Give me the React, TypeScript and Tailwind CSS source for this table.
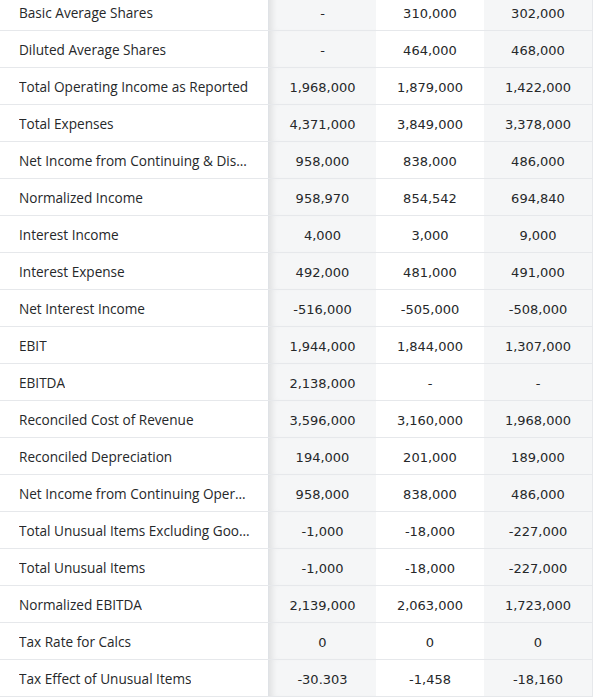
import React from "react";

type Row = { label: string; values: [string, string, string] };

const rows: Row[] = [
  { label: "Basic Average Shares", values: ["-", "310,000", "302,000"] },
  { label: "Diluted Average Shares", values: ["-", "464,000", "468,000"] },
  { label: "Total Operating Income as Reported", values: ["1,968,000", "1,879,000", "1,422,000"] },
  { label: "Total Expenses", values: ["4,371,000", "3,849,000", "3,378,000"] },
  { label: "Net Income from Continuing & Discontinued Operation", values: ["958,000", "838,000", "486,000"] },
  { label: "Normalized Income", values: ["958,970", "854,542", "694,840"] },
  { label: "Interest Income", values: ["4,000", "3,000", "9,000"] },
  { label: "Interest Expense", values: ["492,000", "481,000", "491,000"] },
  { label: "Net Interest Income", values: ["-516,000", "-505,000", "-508,000"] },
  { label: "EBIT", values: ["1,944,000", "1,844,000", "1,307,000"] },
  { label: "EBITDA", values: ["2,138,000", "-", "-"] },
  { label: "Reconciled Cost of Revenue", values: ["3,596,000", "3,160,000", "1,968,000"] },
  { label: "Reconciled Depreciation", values: ["194,000", "201,000", "189,000"] },
  { label: "Net Income from Continuing Operation Net Minority Interest", values: ["958,000", "838,000", "486,000"] },
  { label: "Total Unusual Items Excluding Goodwill", values: ["-1,000", "-18,000", "-227,000"] },
  { label: "Total Unusual Items", values: ["-1,000", "-18,000", "-227,000"] },
  { label: "Normalized EBITDA", values: ["2,139,000", "2,063,000", "1,723,000"] },
  { label: "Tax Rate for Calcs", values: ["0", "0", "0"] },
  { label: "Tax Effect of Unusual Items", values: ["-30.303", "-1,458", "-18,160"] },
];

const cellBg = ["bg-[#f5f6f7]", "bg-white", "bg-[#f5f6f7]"];

export default function App() {
  return (
    <div className="w-[595px] h-[700px] overflow-hidden bg-white text-[#26282a]">
      <div className="-mt-[6px] w-[593px] border-r border-[#e6e8eb]">
        {rows.map((row) => (
          <div key={row.label} className="flex h-[37px] border-b border-[#e6e8eb]">
            <div
              className="w-[268px] shrink-0 flex items-center pl-[19px] pr-[18px] pt-[2px] bg-white text-[13.6px]"
              style={{ fontFamily: '"Open Sans", "Noto Sans", sans-serif' }}
            >
              <span className="truncate">{row.label}</span>
            </div>
            {row.values.map((v, i) => (
              <div
                key={i}
                className={`w-[108px] shrink-0 flex items-center justify-center pt-[3px] text-[13px] ${cellBg[i]} ${
                  i === 0 ? "border-l border-[#dfe2e6] shadow-[inset_7px_0_6px_-4px_rgba(0,0,0,0.09)]" : ""
                }`}
                style={{ fontFamily: '"DejaVu Sans", Verdana, sans-serif' }}
              >
                {v}
              </div>
            ))}
          </div>
        ))}
      </div>
    </div>
  );
}
